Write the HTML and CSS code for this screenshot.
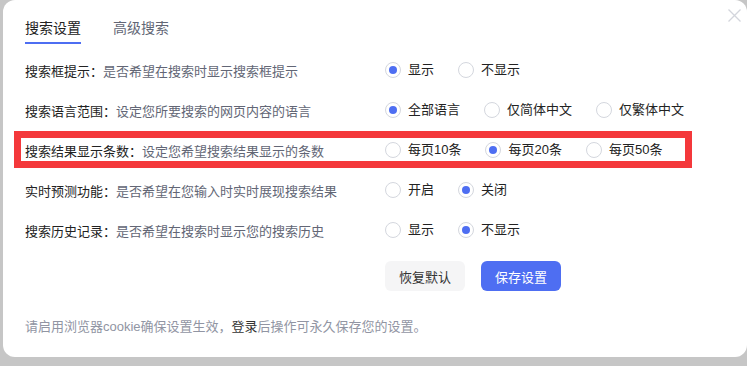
FILE: index.html
```html
<!DOCTYPE html>
<html lang="zh-CN">
<head>
<meta charset="utf-8">
<title>搜索设置</title>
<link rel="stylesheet" href="styles.css">
</head>
<body>
<div class="panel">
  <button class="close" aria-label="关闭">
    <svg width="13" height="13" viewBox="0 0 13 13"><path d="M0.5 0.5 L12.5 12.5 M12.5 0.5 L0.5 12.5" stroke="#d3d5dc" stroke-width="1.3" fill="none"/></svg>
  </button>
  <div class="tabs">
    <div class="tab active">搜索设置</div>
    <div class="tab">高级搜索</div>
  </div>
  <div class="rows">
    <div class="row">
      <div class="label"><span class="title">搜索框提示：</span><span class="desc">是否希望在搜索时显示搜索框提示</span></div>
      <div class="opts">
        <span class="opt"><span class="radio on"></span>显示</span>
        <span class="opt"><span class="radio"></span>不显示</span>
      </div>
    </div>
    <div class="row">
      <div class="label"><span class="title">搜索语言范围：</span><span class="desc">设定您所要搜索的网页内容的语言</span></div>
      <div class="opts">
        <span class="opt"><span class="radio on"></span>全部语言</span>
        <span class="opt"><span class="radio"></span>仅简体中文</span>
        <span class="opt"><span class="radio"></span>仅繁体中文</span>
      </div>
    </div>
    <div class="row highlight">
      <div class="label"><span class="title">搜索结果显示条数：</span><span class="desc">设定您希望搜索结果显示的条数</span></div>
      <div class="opts">
        <span class="opt"><span class="radio"></span>每页10条</span>
        <span class="opt"><span class="radio on"></span>每页20条</span>
        <span class="opt"><span class="radio"></span>每页50条</span>
      </div>
    </div>
    <div class="row">
      <div class="label"><span class="title">实时预测功能：</span><span class="desc">是否希望在您输入时实时展现搜索结果</span></div>
      <div class="opts">
        <span class="opt"><span class="radio"></span>开启</span>
        <span class="opt"><span class="radio on"></span>关闭</span>
      </div>
    </div>
    <div class="row">
      <div class="label"><span class="title">搜索历史记录：</span><span class="desc">是否希望在搜索时显示您的搜索历史</span></div>
      <div class="opts">
        <span class="opt"><span class="radio"></span>显示</span>
        <span class="opt"><span class="radio on"></span>不显示</span>
      </div>
    </div>
  </div>
  <div class="actions">
    <button class="btn btn-default">恢复默认</button>
    <button class="btn btn-primary">保存设置</button>
  </div>
  <p class="footer">请启用浏览器cookie确保设置生效，<span class="login">登录</span>后操作可永久保存您的设置。</p>
</div>
</body>
</html>
```

FILE: styles.css
```css
html, body {
  margin: 0;
  padding: 0;
}
body {
  background: #c6c6c6;
  font-family: "Liberation Sans", "Noto Sans CJK SC", sans-serif;
  width: 747px;
  height: 366px;
  overflow: hidden;
}
.panel {
  position: relative;
  margin-left: 3px;
  width: 744px;
  height: 357px;
  background: #fff;
  border-radius: 12px;
  box-sizing: border-box;
  padding-left: 22px;
}
.close {
  position: absolute;
  left: 725px;
  top: 9px;
  border: 0;
  background: none;
  padding: 0;
  width: 13px;
  height: 13px;
  display: block;
}
.close svg { display: block; }
.tabs {
  display: flex;
  gap: 32px;
  padding-top: 18px;
}
.tab {
  font-size: 14px;
  line-height: 20px;
  color: #626675;
  padding-bottom: 4px;
  border-bottom: 2px solid transparent;
}
.tab.active {
  color: #222;
  border-bottom-color: #4e6ef2;
}
.rows {
  margin-top: 6px;
}
.row {
  display: grid;
  grid-template-columns: 360px 1fr;
  align-items: center;
  height: 40px;
  font-size: 13px;
  position: relative;
}
.title { color: #222; }
.desc { color: #626675; }
.opts {
  display: flex;
  align-items: center;
  color: #222;
}
.opt {
  display: flex;
  align-items: center;
  margin-right: 24px;
  line-height: 16px;
}
.radio {
  width: 16px;
  height: 16px;
  box-sizing: border-box;
  border: 1px solid #d4d7de;
  border-radius: 50%;
  margin-right: 7px;
  display: flex;
  align-items: center;
  justify-content: center;
}
.radio.on::before {
  content: "";
  width: 8px;
  height: 8px;
  border-radius: 50%;
  background: #4e6ef2;
}
.highlight::after {
  content: "";
  position: absolute;
  left: -11px;
  top: 1px;
  width: 678px;
  height: 37px;
  border: 7px solid #f4383b;
  box-sizing: border-box;
  pointer-events: none;
}
.actions {
  display: flex;
  gap: 16px;
  margin-top: 11px;
  padding-left: 360px;
}
.btn {
  width: 80px;
  height: 30px;
  border: 0;
  border-radius: 6px;
  font-family: inherit;
  font-size: 13px;
  padding: 0;
}
.btn-default {
  background: #f5f5f6;
  color: #333;
}
.btn-primary {
  background: #4e6ef2;
  color: #fff;
}
.footer {
  margin: 26px 0 0;
  font-size: 13px;
  line-height: 20px;
  color: #9195a3;
}
.login { color: #333; }
```
